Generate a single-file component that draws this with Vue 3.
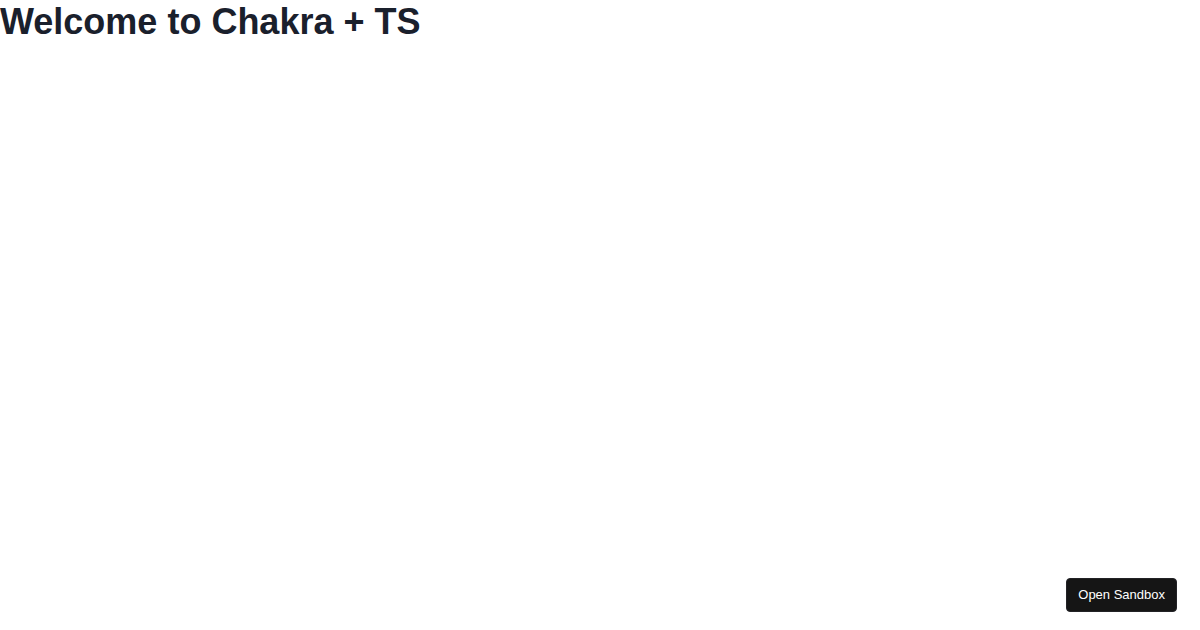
<!-- src/App.vue -->
<template>
  <main>
    <h1 class="heading">{{ title }}</h1>
    <button type="button" class="sandbox-button" @click="openSandbox">
      Open Sandbox
    </button>
  </main>
</template>

<script setup>
import { ref } from 'vue';

const title = 'Welcome to Chakra + TS';
const opened = ref(false);

const openSandbox = () => {
  opened.value = true;
};
</script>

<style>
body {
  margin: 0;
  background: #fff;
}
</style>

<style scoped>
.heading {
  margin: 0;
  color: #1a202c;
  font-family: "Liberation Sans", Helvetica, Arial, sans-serif;
  font-size: 36px;
  font-weight: 700;
  line-height: 43px;
}

.sandbox-button {
  position: fixed;
  right: 23px;
  bottom: 18px;
  height: 34px;
  padding: 0 11px;
  border: 1px solid #222226;
  border-radius: 4px;
  background: #151515;
  color: #fff;
  font-family: "Liberation Sans", Helvetica, Arial, sans-serif;
  font-size: 13px;
  line-height: 16px;
  cursor: pointer;
}

.sandbox-button:hover {
  background: #252525;
}
</style>
